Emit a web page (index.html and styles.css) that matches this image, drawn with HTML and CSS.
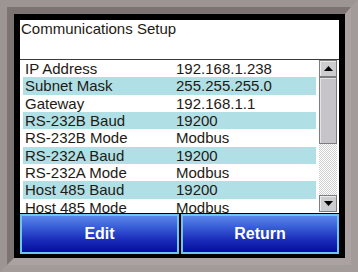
FILE: index.html
```html
<!DOCTYPE html>
<html>
<head>
<meta charset="utf-8">
<link rel="stylesheet" href="styles.css">
</head>
<body>
<div class="bezel-outer">
  <div class="bezel-inner">
    <div class="screen">
      <div class="title">Communications Setup</div>
      <div class="list">
        <div class="rows">
          <div class="row"><span class="label">IP Address</span><span class="value">192.168.1.238</span></div>
          <div class="row alt"><span class="label">Subnet Mask</span><span class="value">255.255.255.0</span></div>
          <div class="row"><span class="label">Gateway</span><span class="value">192.168.1.1</span></div>
          <div class="row alt"><span class="label">RS-232B Baud</span><span class="value">19200</span></div>
          <div class="row"><span class="label">RS-232B Mode</span><span class="value">Modbus</span></div>
          <div class="row alt"><span class="label">RS-232A Baud</span><span class="value">19200</span></div>
          <div class="row"><span class="label">RS-232A Mode</span><span class="value">Modbus</span></div>
          <div class="row alt"><span class="label">Host 485 Baud</span><span class="value">19200</span></div>
          <div class="row"><span class="label">Host 485 Mode</span><span class="value">Modbus</span></div>
        </div>
        <div class="scrollbar">
          <div class="sb-btn"><svg width="9" height="5" viewBox="0 0 9 5"><polygon points="0,5 9,5 4.5,0" fill="#000"/></svg></div>
          <div class="sb-thumb"></div>
          <div class="sb-track"></div>
          <div class="sb-btn"><svg width="9" height="5" viewBox="0 0 9 5"><polygon points="0,0 9,0 4.5,5" fill="#000"/></svg></div>
        </div>
      </div>
      <div class="buttons">
        <div class="btn btn-edit">Edit</div>
        <div class="btn btn-return">Return</div>
      </div>
    </div>
  </div>
</div>
</body>
</html>
```

FILE: styles.css
```css
html, body {
  margin: 0;
  padding: 0;
}
body {
  width: 358px;
  height: 272px;
  overflow: hidden;
  font-family: "Liberation Sans", Arial, sans-serif;
}
.bezel-outer {
  box-sizing: border-box;
  width: 358px;
  height: 272px;
  border-style: solid;
  border-width: 7px;
  border-color: #9d9593 #a39b99 #a39b99 #9d9593;
}
.bezel-inner {
  box-sizing: border-box;
  height: 100%;
  border-style: solid;
  border-width: 7px 6px 7px 7px;
  border-color: #7c7472 #aba3a1 #aba3a1 #7c7472;
}
.screen {
  box-sizing: border-box;
  height: 100%;
  background: #000;
  border-style: solid;
  border-color: #000;
  border-width: 6px 6px 4px 6px;
  display: flex;
  flex-direction: column;
}
.title {
  height: 39px;
  background: #fff;
  color: #1e1a14;
  font-size: 15px;
  line-height: 17px;
  padding-left: 1px;
  box-sizing: border-box;
  border-bottom: 1px solid #3a3a3a;
  height: 40px;
}
.list {
  height: 153px;
  background: #fff;
  display: flex;
  padding: 0 2px 0 3px;
  gap: 3px;
  overflow: hidden;
}
.rows {
  width: 293px;
  display: flex;
  flex-direction: column;
  flex: none;
}
.row {
  flex: none;
  height: calc(52px / 3);
  line-height: calc(52px / 3);
  font-size: 15px;
  color: #1e1a14;
  padding-left: 2px;
  display: flex;
  white-space: nowrap;
}
.row.alt {
  background: #b0e0e6;
}
.label {
  width: 151px;
  flex: none;
}
.scrollbar {
  width: 18px;
  flex: none;
  display: flex;
  flex-direction: column;
  height: 152px;
}
.sb-btn {
  box-sizing: border-box;
  height: 17px;
  flex: none;
  background: #cdcccf;
  border: 1px solid #7d7d7d;
  box-shadow: inset 1px 1px 0 #ececec;
  display: flex;
  align-items: center;
  justify-content: center;
}
.sb-thumb {
  box-sizing: border-box;
  height: 67px;
  flex: none;
  background: #c6c4c8;
  border: 1px solid #7d7d7d;
  box-shadow: inset 1px 1px 0 #e4e4e4;
}
.sb-track {
  flex: 1;
  background-color: #ffffff;
  background-image: conic-gradient(#d0d0d0 25%, #ffffff 0 50%, #d0d0d0 0 75%, #ffffff 0);
  background-size: 2px 2px;
}
.buttons {
  margin-top: 1px;
  height: 40px;
  display: flex;
  gap: 2px;
}
.btn {
  box-sizing: border-box;
  height: 40px;
  border: 2px solid #6ec5f2;
  background: linear-gradient(#5a86ea 0%, #3a5fd8 30%, #1a2dbb 65%, #040e9e 100%);
  color: #fff;
  font-weight: bold;
  font-size: 16px;
  display: flex;
  align-items: center;
  justify-content: center;
  padding-bottom: 1px;
}
.btn-edit {
  width: 159px;
  flex: none;
}
.btn-return {
  flex: 1;
}
```
